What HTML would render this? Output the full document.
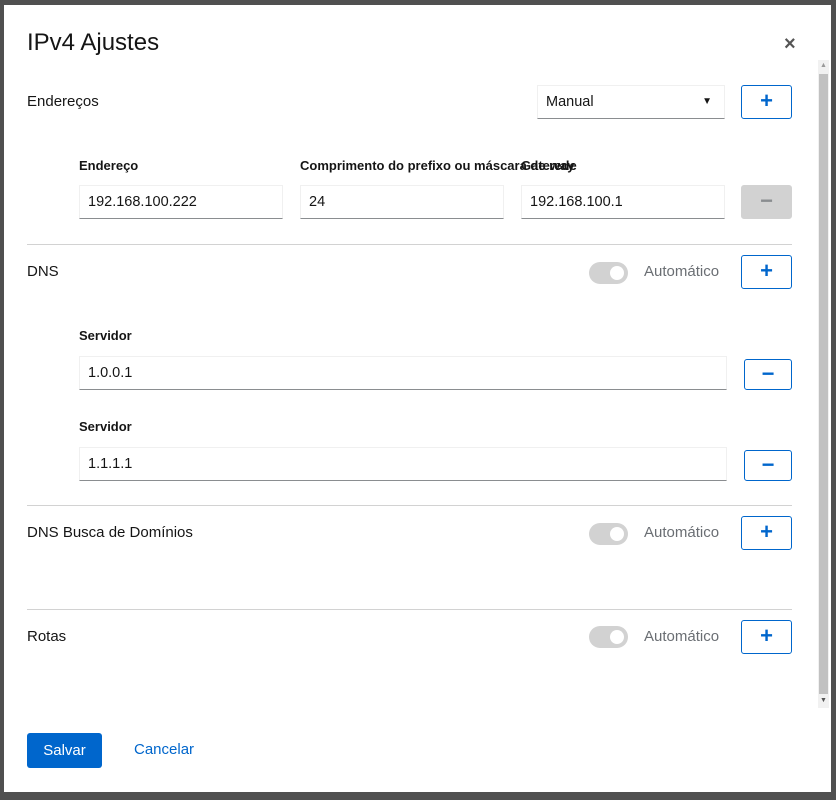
<!DOCTYPE html>
<html><head><meta charset="utf-8"><style>
body{margin:0;width:836px;height:800px;background:#505050;font-family:"Liberation Sans",sans-serif;overflow:hidden;position:relative}
.d{position:absolute;left:4px;top:5px;width:827px;height:787px;background:#fff}
.a{position:absolute}
.t{font-size:15px;color:#151515}
.lb{font-size:13px;font-weight:bold;color:#151515}
.in{position:absolute;box-sizing:border-box;background:#fff;border:1px solid #f0f0f0;border-bottom:1px solid #8a8d90;font-size:14.5px;color:#151515;padding-left:8px;line-height:32px}
.bt{position:absolute;box-sizing:border-box;border:1px solid #06c;border-radius:3px;background:#fff;color:#06c;text-align:center;font-weight:bold;font-size:22px}
.hr{position:absolute;left:27px;width:765px;height:1px;background:#d2d2d2}
.tg{position:absolute;width:39px;height:22px;border-radius:11px;background:#d2d2d2}
.tg:after{content:"";position:absolute;right:4px;top:4px;width:14px;height:14px;border-radius:50%;background:#fff}
.au{position:absolute;font-size:15px;color:#6a6e73}
</style></head><body>
<div class="d"></div>
<div class="a" style="left:27px;top:29px;font-size:24px;color:#151515">IPv4 Ajustes</div>
<div class="a" style="left:784px;top:33px;font-size:20px;font-weight:bold;color:#555">×</div>
<div class="a" style="left:818px;top:60px;width:11px;height:648px;background:#f1f1f1"></div>
<div class="a" style="left:819px;top:74px;width:9px;height:620px;background:#c1c1c1"></div>
<div class="a" style="left:820px;top:62px;font-size:7px;color:#999">▲</div>
<div class="a" style="left:820px;top:697px;font-size:7px;color:#555">▼</div>

<div class="a t" style="left:27px;top:93px">Endereços</div>
<div class="in" style="left:537px;top:85px;width:188px;height:34px;border-color:#f0f0f0 #f0f0f0 #8a8d90">Manual<span style="position:absolute;right:12px;font-size:10px">▼</span></div>
<div class="bt" style="left:741px;top:85px;width:51px;height:34px;line-height:30px">+</div>

<div class="a lb" style="left:79px;top:158px">Endereço</div>
<div class="a lb" style="left:300px;top:158px">Comprimento do prefixo ou máscara de rede</div>
<div class="a lb" style="left:521px;top:158px">Gateway</div>
<div class="in" style="left:79px;top:185px;width:204px;height:34px">192.168.100.222</div>
<div class="in" style="left:300px;top:185px;width:204px;height:34px">24</div>
<div class="in" style="left:521px;top:185px;width:204px;height:34px">192.168.100.1</div>
<div class="bt" style="left:741px;top:185px;width:51px;height:34px;line-height:30px;background:#d2d2d2;border-color:#d2d2d2;color:#8a8d90">−</div>

<div class="hr" style="top:244px"></div>
<div class="a t" style="left:27px;top:263px">DNS</div>
<div class="tg" style="left:589px;top:262px"></div>
<div class="au" style="left:644px;top:263px">Automático</div>
<div class="bt" style="left:741px;top:255px;width:51px;height:34px;line-height:30px">+</div>

<div class="a lb" style="left:79px;top:328px">Servidor</div>
<div class="in" style="left:79px;top:356px;width:648px;height:34px">1.0.0.1</div>
<div class="bt" style="left:744px;top:359px;width:48px;height:31px;line-height:27px">−</div>
<div class="a lb" style="left:79px;top:419px">Servidor</div>
<div class="in" style="left:79px;top:447px;width:648px;height:34px">1.1.1.1</div>
<div class="bt" style="left:744px;top:450px;width:48px;height:31px;line-height:27px">−</div>

<div class="hr" style="top:505px"></div>
<div class="a t" style="left:27px;top:524px">DNS Busca de Domínios</div>
<div class="tg" style="left:589px;top:523px"></div>
<div class="au" style="left:644px;top:524px">Automático</div>
<div class="bt" style="left:741px;top:516px;width:51px;height:34px;line-height:30px">+</div>

<div class="hr" style="top:609px"></div>
<div class="a t" style="left:27px;top:628px">Rotas</div>
<div class="tg" style="left:589px;top:626px"></div>
<div class="au" style="left:644px;top:628px">Automático</div>
<div class="bt" style="left:741px;top:620px;width:51px;height:34px;line-height:30px">+</div>

<div class="a" style="left:27px;top:733px;width:75px;height:35px;background:#06c;border-radius:3px;color:#fff;font-size:15px;text-align:center;line-height:35px">Salvar</div>
<div class="a" style="left:134px;top:741px;font-size:15px;color:#06c">Cancelar</div>
</body></html>
